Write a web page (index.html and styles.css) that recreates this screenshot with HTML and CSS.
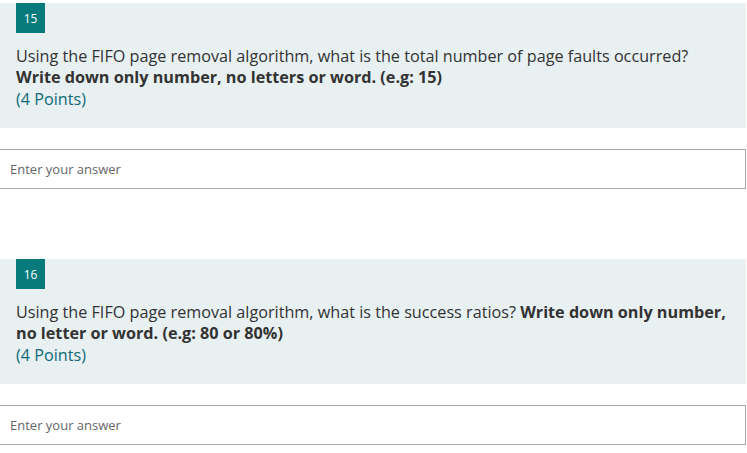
FILE: index.html
```html
<!DOCTYPE html>
<html lang="en">
  <head>
    <meta charset="UTF-8" />
    <meta name="viewport" content="width=device-width, initial-scale=1.0" />
    <title>Quiz - Page Replacement</title>
    <link rel="stylesheet" href="styles.css">
  </head>
  <body>
    <div class="form">
      <div class="question">
        <div class="question-head">
          <span class="question-number">15</span>
        </div>
        <div class="question-title">
          Using the FIFO page removal algorithm, what is the total number of page faults occurred?
          <strong>Write down only number, no letters or word. (e.g: 15)</strong>
          <div class="points">(4 Points)</div>
        </div>
      </div>
      <div class="answer">
        <input type="text" class="answer-input" placeholder="Enter your answer" />
      </div>

      <div class="question">
        <div class="question-head">
          <span class="question-number">16</span>
        </div>
        <div class="question-title">
          Using the FIFO page removal algorithm, what is the success ratios?
          <strong>Write down only number, no letter or word. (e.g: 80 or 80%)</strong>
          <div class="points">(4 Points)</div>
        </div>
      </div>
      <div class="answer">
        <input type="text" class="answer-input" placeholder="Enter your answer" />
      </div>
    </div>
  </body>
</html>
```

FILE: styles.css
```css
* {
  margin: 0;
  padding: 0;
  box-sizing: border-box;
}

body {
  background: #ffffff;
  font-family: 'Open Sans', 'Noto Sans', sans-serif;
  color: #333333;
  overflow: hidden;
}

.form {
  width: 747px;
  margin-left: -1px;
  padding-top: 3px;
}

.question {
  background: #e8f0f2;
  padding: 0 18px 18px 17px;
  height: 125px;
}

.question-head {
  display: flex;
}

.question-number {
  display: flex;
  align-items: center;
  justify-content: center;
  width: 29px;
  height: 30px;
  background: #077b7b;
  color: #ffffff;
  font-size: 12px;
}

.question-title {
  margin-top: 13px;
  font-size: 16.2px;
  line-height: 21.3px;
}

.question-title strong {
  font-weight: 700;
}

.points {
  color: #0e6a7a;
}

.answer {
  padding: 21px 0 70px;
}

.answer-input {
  display: block;
  width: 747px;
  height: 40px;
  border: 1px solid #a8a8a8;
  padding: 0 10px;
  font-family: inherit;
  font-size: 13px;
  color: #333333;
  background: #ffffff;
  outline: none;
}

.answer-input::placeholder {
  color: #666666;
}
```
